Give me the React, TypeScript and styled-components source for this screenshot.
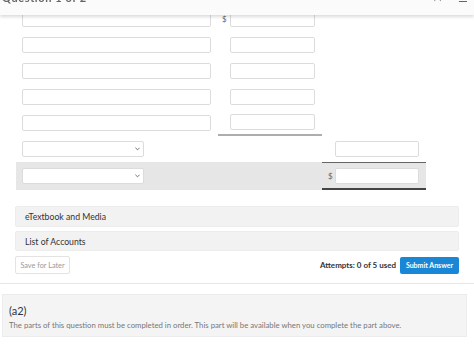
import React from 'react';
import styled, { createGlobalStyle } from 'styled-components';

const GlobalStyle = createGlobalStyle`
  html, body {
    margin: 0;
    padding: 0;
    background: #ffffff;
    font-family: Lato, "Liberation Sans", Arial, sans-serif;
    color: #333;
  }
  * {
    box-sizing: border-box;
  }
`;

const Header = styled.div`
  position: fixed;
  top: 0;
  left: 0;
  right: 0;
  height: 15px;
  background: #fbfbfb;
  box-shadow: 0 2px 3px rgba(0, 0, 0, 0.14);
  display: flex;
  align-items: flex-end;
  justify-content: space-between;
  overflow: hidden;
  z-index: 10;
  padding: 0 6px 0 2px;
`;

const HeaderTitle = styled.div`
  font-size: 11px;
  font-weight: 700;
  color: #666;
  line-height: 11px;
  margin-bottom: 12px;
  letter-spacing: 0.6px;
`;

const HeaderNav = styled.div`
  display: flex;
  align-items: flex-end;
  gap: 16px;
  margin-bottom: 12px;
  font-size: 11px;
  line-height: 11px;
  color: #666;
`;

const Content = styled.div`
  padding-top: 6px;
`;

const Table = styled.div`
  padding-left: 16px;
  width: 426px;
`;

const Row = styled.div<{ $shaded?: boolean }>`
  display: grid;
  grid-template-columns: 202px 104px 104px;
  height: ${(p) => (p.$shaded ? '28px' : '26px')};
  background: ${(p) => (p.$shaded ? '#e6e6e6' : 'transparent')};
`;

const Cell = styled.div<{ $pad?: number; $top?: string; $bottom?: string }>`
  display: flex;
  align-items: center;
  padding-left: ${(p) => p.$pad ?? 6}px;
  border-top: ${(p) => p.$top ?? 'none'};
  border-bottom: ${(p) => p.$bottom ?? 'none'};
`;

const Dollar = styled.span<{ $w?: number }>`
  width: ${(p) => p.$w ?? 8}px;
  font-size: 8px;
  color: #666;
`;

const Input = styled.div<{ $w: number }>`
  width: ${(p) => p.$w}px;
  height: 16px;
  background: #fff;
  border: 1px solid #dcdcdc;
  border-radius: 2px;
`;

const SelectBox = styled.div`
  position: relative;
  width: 122px;
  height: 16px;
  background: #fff;
  border: 1px solid #dcdcdc;
  border-radius: 2px;
`;

const Chevron = styled.svg`
  position: absolute;
  right: 3px;
  top: 5px;
`;

const Accordions = styled.div`
  margin: 16px 15px 0 15px;
  display: flex;
  flex-direction: column;
  gap: 4px;
`;

const AccordionItem = styled.div<{ $h: number }>`
  height: ${(p) => p.$h}px;
  background: #f2f2f2;
  border: 1px solid #ececec;
  border-radius: 2px;
  display: flex;
  align-items: center;
  padding-left: 9px;
  font-size: 8.7px;
  color: #333;
`;

const Actions = styled.div`
  margin: 5px 15px 0 15px;
  display: flex;
  align-items: center;
  justify-content: space-between;
  height: 18px;
`;

const SaveButton = styled.button`
  height: 18px;
  width: 55px;
  padding: 0;
  background: #fff;
  border: 1px solid #e3e3e3;
  border-radius: 2px;
  font-family: inherit;
  font-size: 7.3px;
  color: #999;
`;

const RightActions = styled.div`
  display: flex;
  align-items: center;
  gap: 4px;
`;

const Attempts = styled.span`
  font-size: 8px;
  font-weight: 700;
  color: #333;
`;

const SubmitButton = styled.button`
  height: 17px;
  width: 59px;
  padding: 0;
  background: #1a86d6;
  border: none;
  border-radius: 2px;
  font-family: inherit;
  font-size: 7px;
  font-weight: 700;
  color: #fff;
`;

const Divider = styled.div`
  margin-top: 9px;
  height: 1px;
  background: #e6e6e6;
`;

const NextPart = styled.div`
  margin: 10px 7px 0 2px;
  height: 43px;
  background: #f4f4f4;
  border: 1px solid #ececec;
  padding: 10px 0 0 6px;
`;

const PartLabel = styled.div`
  font-size: 11px;
  color: #333;
  line-height: 12px;
`;

const PartNote = styled.div`
  margin-top: 4px;
  font-size: 7.75px;
  color: #777;
  line-height: 9px;
`;

const ChevronIcon = () => (
  <Chevron width="5" height="4" viewBox="0 0 6 4">
    <path d="M0.5 0.5 L3 3 L5.5 0.5" fill="none" stroke="#555" strokeWidth="1" />
  </Chevron>
);

export default function App() {
  const plainRows = [0, 1, 2, 3, 4];
  return (
    <>
      <GlobalStyle />
      <Header>
        <HeaderTitle>Question 1 of 2</HeaderTitle>
        <HeaderNav>
          <span>‹ ›</span>
          <span>☰</span>
        </HeaderNav>
      </Header>
      <Content>
        <Table>
          {plainRows.map((i) => (
            <Row key={i}>
              <Cell>
                <Input $w={189} />
              </Cell>
              <Cell $pad={4} $bottom={i === 4 ? '2px solid #adadad' : undefined}>
                <Dollar>{i === 0 ? '$' : ''}</Dollar>
                <Input $w={85} />
              </Cell>
              <Cell />
            </Row>
          ))}
          <Row>
            <Cell>
              <SelectBox>
                <ChevronIcon />
              </SelectBox>
            </Cell>
            <Cell />
            <Cell $pad={13}>
              <Input $w={84} />
            </Cell>
          </Row>
          <Row $shaded>
            <Cell>
              <SelectBox>
                <ChevronIcon />
              </SelectBox>
            </Cell>
            <Cell />
            <Cell $pad={6} $top="1px solid #666" $bottom="2px solid #444">
              <Dollar $w={7}>$</Dollar>
              <Input $w={84} />
            </Cell>
          </Row>
        </Table>
        <Accordions>
          <AccordionItem $h={21}>eTextbook and Media</AccordionItem>
          <AccordionItem $h={20}>List of Accounts</AccordionItem>
        </Accordions>
        <Actions>
          <SaveButton>Save for Later</SaveButton>
          <RightActions>
            <Attempts>Attempts: 0 of 5 used</Attempts>
            <SubmitButton>Submit Answer</SubmitButton>
          </RightActions>
        </Actions>
        <Divider />
        <NextPart>
          <PartLabel>(a2)</PartLabel>
          <PartNote>
            The parts of this question must be completed in order. This part will be available when you complete the part above.
          </PartNote>
        </NextPart>
      </Content>
    </>
  );
}
